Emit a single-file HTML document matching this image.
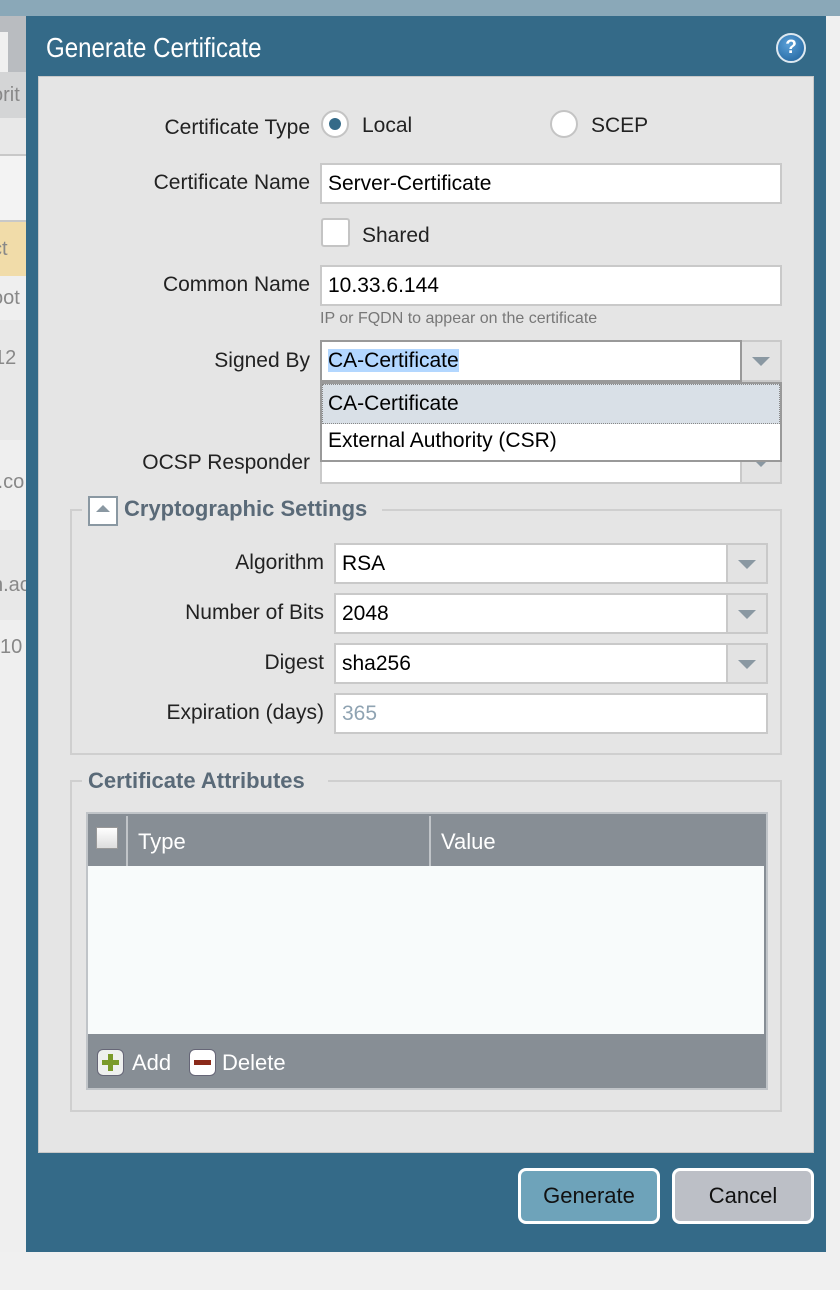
<!DOCTYPE html>
<html><head><style>
*{margin:0;padding:0;box-sizing:border-box}
body{width:840px;height:1290px;position:relative;background:#f0f0f0;font-family:"Liberation Sans Narrow","Liberation Sans",sans-serif;overflow:hidden;color:#222}
.a{position:absolute}
.lbl{position:absolute;font-size:21px;color:#222;text-align:right;white-space:nowrap}
.inp{position:absolute;background:#fff;border:2px solid #c9c9c9;font-size:21px;padding-left:6px;color:#000;white-space:nowrap}
.dd{position:absolute;background:#e3e3e3;border:2px solid #c9c9c9;border-left:none}
.dd:after{content:"";position:absolute;left:50%;top:50%;margin:-4px 0 0 -9px;border-left:9px solid transparent;border-right:9px solid transparent;border-top:9px solid #8a98a2}
.bg{position:absolute;left:0;width:26px;color:#888;font-family:"Liberation Sans",sans-serif;font-size:20px;overflow:hidden;white-space:nowrap}
</style></head><body>
<div class="a" style="left:0;top:0;width:840px;height:16px;background:#8aa8b8"></div>
<div class="bg" style="top:16px;height:56px;background:#b9bcc0"><div class="a" style="left:0;top:16px;width:8px;height:40px;background:#f0f0f0"></div></div>
<div class="bg" style="top:72px;height:46px;background:#d4d5d6;line-height:46px;text-indent:-8px">orit</div>
<div class="bg" style="top:118px;height:38px;background:#e8e8e8;border-bottom:2px solid #c8c8c8"></div>
<div class="bg" style="top:156px;height:66px;background:#f3f3f3;border-bottom:2px solid #c8c8c8"></div>
<div class="bg" style="top:222px;height:54px;background:#f1dca9;line-height:54px;text-indent:-8px">ct</div>
<div class="bg" style="top:276px;height:44px;background:#efefef;line-height:44px;text-indent:-8px">oot</div>
<div class="bg" style="top:320px;height:120px;background:#e8e8e8;line-height:76px;text-indent:-6px">12</div>
<div class="bg" style="top:440px;height:90px;background:#efefef;line-height:84px;text-indent:-8px">r.co</div>
<div class="bg" style="top:530px;height:90px;background:#e8e8e8;line-height:110px;text-indent:-8px">n.ac</div>
<div class="bg" style="top:620px;height:632px;background:#efefef;line-height:54px">10</div>
<!-- dialog -->
<div class="a" style="left:26px;top:16px;width:800px;height:1236px;background:#346a88"></div>
<div class="a" style="left:46px;top:32px;font-size:28px;color:#fff;transform:scaleX(0.86);transform-origin:left">Generate Certificate</div>
<div class="a" style="left:776px;top:33px;width:30px;height:30px;border-radius:50%;background:radial-gradient(circle at 40% 35%,#5aa0d8,#1d5f98);border:2px solid #dde8f0;color:#fff;font:bold 19px 'Liberation Sans',sans-serif;text-align:center;line-height:26px">?</div>
<div class="a" style="left:38px;top:76px;width:776px;height:1077px;background:#e5e5e5;border:1px solid #c8c8c8"></div>

<div class="lbl" style="right:530px;top:116px">Certificate Type</div>
<div class="a" style="left:321px;top:110px;width:28px;height:28px;border-radius:50%;background:#fff;border:2px solid #c4c4c4"><div class="a" style="left:6px;top:6px;width:12px;height:12px;border-radius:50%;background:#346a88"></div></div>
<div class="a" style="left:362px;top:114px;font-size:21px">Local</div>
<div class="a" style="left:550px;top:110px;width:28px;height:28px;border-radius:50%;background:#fff;border:2px solid #c4c4c4"></div>
<div class="a" style="left:591px;top:114px;font-size:21px">SCEP</div>

<div class="lbl" style="right:530px;top:171px">Certificate Name</div>
<div class="inp" style="left:320px;top:163px;width:462px;height:41px;line-height:37px">Server-Certificate</div>

<div class="a" style="left:321px;top:218px;width:29px;height:29px;background:#fff;border:2px solid #c4c4c4;border-radius:3px"></div>
<div class="a" style="left:362px;top:224px;font-size:21px">Shared</div>

<div class="lbl" style="right:530px;top:273px">Common Name</div>
<div class="inp" style="left:320px;top:265px;width:462px;height:41px;line-height:37px">10.33.6.144</div>
<div class="a" style="left:320px;top:310px;font-size:16px;color:#777">IP or FQDN to appear on the certificate</div>

<div class="lbl" style="right:530px;top:349px">Signed By</div>
<div class="inp" style="left:320px;top:340px;width:422px;height:42px;line-height:38px;border-color:#999"><span style="background:#b3d7ff">CA-Certificate</span></div>
<div class="dd" style="left:742px;top:340px;width:40px;height:42px"></div>

<div class="lbl" style="right:530px;top:451px">OCSP Responder</div>
<div class="inp" style="left:320px;top:440px;width:422px;height:44px"></div>
<div class="dd" style="left:742px;top:440px;width:40px;height:44px"></div>

<div class="a" style="left:320px;top:382px;width:462px;height:80px;background:#fff;border:2px solid #999"></div>
<div class="a" style="left:322px;top:384px;width:458px;height:40px;background:#d9e0e7;border:1px dotted #888;font-size:21px;line-height:38px;padding-left:5px;color:#000">CA-Certificate</div>
<div class="a" style="left:328px;top:429px;font-size:21px;color:#000">External Authority (CSR)</div>

<!-- crypto -->
<div class="a" style="left:70px;top:509px;width:712px;height:246px;border:2px solid #cfcfcf"></div>
<div class="a" style="left:82px;top:494px;width:300px;height:34px;background:#e5e5e5"></div>
<div class="a" style="left:88px;top:496px;width:30px;height:30px;background:#fff;border:2px solid #8a98a2"><div class="a" style="left:6px;top:7px;border-left:7px solid transparent;border-right:7px solid transparent;border-bottom:7px solid #8a98a2"></div></div>
<div class="a" style="left:124px;top:496px;font-size:22px;font-weight:bold;color:#5a6a78">Cryptographic Settings</div>

<div class="lbl" style="right:516px;top:551px">Algorithm</div>
<div class="inp" style="left:334px;top:543px;width:394px;height:41px;line-height:37px">RSA</div>
<div class="dd" style="left:728px;top:543px;width:40px;height:41px"></div>
<div class="lbl" style="right:516px;top:601px">Number of Bits</div>
<div class="inp" style="left:334px;top:593px;width:394px;height:41px;line-height:37px">2048</div>
<div class="dd" style="left:728px;top:593px;width:40px;height:41px"></div>
<div class="lbl" style="right:516px;top:651px">Digest</div>
<div class="inp" style="left:334px;top:643px;width:394px;height:41px;line-height:37px">sha256</div>
<div class="dd" style="left:728px;top:643px;width:40px;height:41px"></div>
<div class="lbl" style="right:516px;top:701px">Expiration (days)</div>
<div class="inp" style="left:334px;top:693px;width:434px;height:41px;line-height:37px;color:#8fa3b2">365</div>

<!-- attributes -->
<div class="a" style="left:70px;top:780px;width:712px;height:332px;border:2px solid #cfcfcf"></div>
<div class="a" style="left:82px;top:766px;width:246px;height:30px;background:#e5e5e5"></div>
<div class="a" style="left:88px;top:768px;font-size:22px;font-weight:bold;color:#5a6a78">Certificate Attributes</div>
<div class="a" style="left:86px;top:812px;width:682px;height:278px;background:#878e95;border:2px solid #c0c4c8"></div>
<div class="a" style="left:88px;top:866px;width:676px;height:168px;background:#f8fbfb"></div>
<div class="a" style="left:126px;top:816px;width:2px;height:50px;background:#c0c4c8"></div>
<div class="a" style="left:429px;top:816px;width:2px;height:50px;background:#c0c4c8"></div>
<div class="a" style="left:96px;top:827px;width:22px;height:22px;background:linear-gradient(#fff,#ddd);border:1px solid #999"></div>
<div class="a" style="left:138px;top:829px;font-size:22px;color:#fff">Type</div>
<div class="a" style="left:441px;top:829px;font-size:22px;color:#fff">Value</div>
<div class="a" style="left:97px;top:1049px;width:27px;height:27px;border-radius:6px;background:#eef0ee;border:1px solid #667"><div class="a" style="left:10px;top:4px;width:5px;height:17px;background:#7a9a2a"></div><div class="a" style="left:4px;top:10px;width:17px;height:5px;background:#7a9a2a"></div></div>
<div class="a" style="left:132px;top:1050px;font-size:22px;color:#fff">Add</div>
<div class="a" style="left:189px;top:1049px;width:27px;height:27px;border-radius:6px;background:#fff;border:1px solid #667"><div class="a" style="left:4px;top:10px;width:17px;height:5px;background:#8b2a1a"></div></div>
<div class="a" style="left:222px;top:1050px;font-size:22px;color:#fff">Delete</div>

<!-- buttons -->
<div class="a" style="left:518px;top:1168px;width:142px;height:56px;background:#6ea3ba;border:3px solid #fff;border-radius:8px;font-size:22px;text-align:center;line-height:50px;color:#111">Generate</div>
<div class="a" style="left:672px;top:1168px;width:142px;height:56px;background:#bcbfc6;border:3px solid #fff;border-radius:8px;font-size:22px;text-align:center;line-height:50px;color:#111">Cancel</div>
</body></html>
